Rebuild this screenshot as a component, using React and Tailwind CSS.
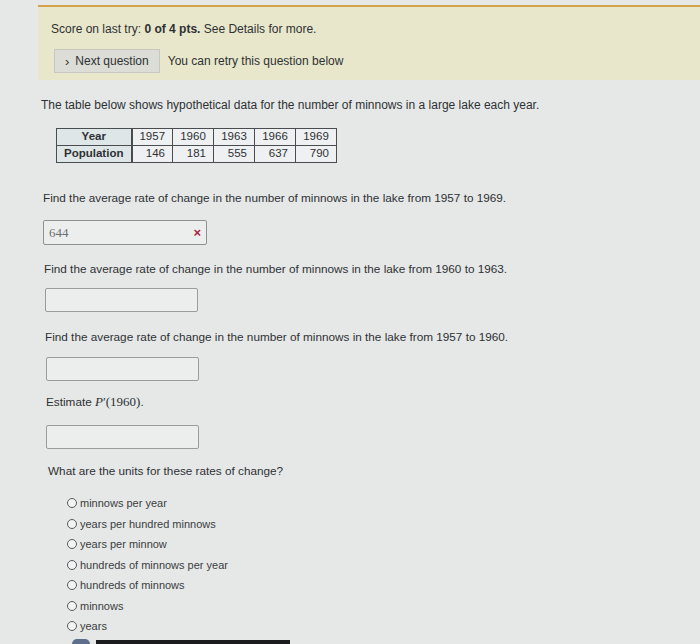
import React from "react";

const years = ["1957", "1960", "1963", "1966", "1969"];
const pops = ["146", "181", "555", "637", "790"];
const units = [
  "minnows per year",
  "years per hundred minnows",
  "years per minnow",
  "hundreds of minnows per year",
  "hundreds of minnows",
  "minnows",
  "years",
];

function Blank({ width = "w-[153px]" }) {
  return <div className={`${width} h-[24px] border border-[#9a9c9c] rounded-[2px] bg-[#eceeee]`} />;
}

export default function App() {
  return (
    <div
      className="w-[700px] h-[644px] overflow-hidden bg-[#e6e8e8] text-[#2e3134] relative"
      style={{ fontFamily: '"Liberation Sans", Arial, sans-serif' }}
    >
      <div className="ml-[38px] mt-[5px] h-[75px] bg-[#e8e7cb] border-t-2 border-[#d3a34c] pl-[13px] pt-[14px]">
        <p className="text-[12px] leading-[16px]">
          Score on last try: <b>0 of 4 pts.</b> See Details for more.
        </p>
        <div className="flex items-center mt-[12px] ml-[3px]">
          <div className="h-[24px] px-[10px] flex items-center gap-[6px] bg-[#dcddd6] border border-[#c6c7c0] text-[12px]">
            <span className="text-[13px] leading-none">›</span>
            <span>Next question</span>
          </div>
          <span className="ml-[8px] text-[12px]">You can retry this question below</span>
        </div>
      </div>

      <p className="ml-[41px] mt-[17px] text-[12px] leading-[16px]">
        The table below shows hypothetical data for the number of minnows in a large lake each year.
      </p>

      <table className="ml-[56px] mt-[15px] border-collapse text-[11.5px] bg-[#eef0f1]">
        <tbody>
          <tr className="h-[17px]">
            <td className="w-[75px] border border-[#4a4d50] border-r-2 bg-[#dfe6e8] text-center font-bold leading-none">Year</td>
            {years.map((y) => (
              <td key={y} className="w-[41px] border border-[#4a4d50] text-center leading-none">{y}</td>
            ))}
          </tr>
          <tr className="h-[17px]">
            <td className="border border-[#4a4d50] border-r-2 bg-[#dfe6e8] text-center font-bold leading-none">Population</td>
            {pops.map((p) => (
              <td key={p} className="border border-[#4a4d50] text-right pr-[7px] leading-none">{p}</td>
            ))}
          </tr>
        </tbody>
      </table>

      <p className="ml-[43px] mt-[27px] text-[11.75px] leading-[16px]">
        Find the average rate of change in the number of minnows in the lake from 1957 to 1969.
      </p>
      <div className="ml-[43px] mt-[14px] w-[164px] h-[25px] border border-[#8f9191] rounded-[2px] bg-[#eceeee] flex items-center justify-between px-[5px]">
        <span className="text-[13px] text-[#6b6e70]" style={{ fontFamily: '"Liberation Serif", serif' }}>644</span>
        <span className="text-[#a2263a] text-[13px] font-bold leading-none">×</span>
      </div>

      <p className="ml-[44px] mt-[16px] text-[11.75px] leading-[16px]">
        Find the average rate of change in the number of minnows in the lake from 1960 to 1963.
      </p>
      <div className="ml-[45px] mt-[11px]"><Blank /></div>

      <p className="ml-[45px] mt-[17px] text-[11.75px] leading-[16px]">
        Find the average rate of change in the number of minnows in the lake from 1957 to 1960.
      </p>
      <div className="ml-[46px] mt-[12px]"><Blank /></div>

      <p className="ml-[46px] mt-[13px] text-[11.75px] leading-[16px]">
        Estimate{" "}
        <span className="text-[13px]" style={{ fontFamily: '"Liberation Serif", serif' }}>
          <i>P</i>′(1960)
        </span>
        .
      </p>
      <div className="ml-[46px] mt-[15px]"><Blank /></div>

      <p className="ml-[48px] mt-[14px] text-[11.75px] leading-[16px]">What are the units for these rates of change?</p>

      <div className="ml-[67px] mt-[16px] flex flex-col gap-[4px]">
        {units.map((u) => (
          <label key={u} className="flex items-center gap-[3px] h-[16.5px] text-[11px] text-[#3a3d40]">
            <span className="w-[10px] h-[10px] rounded-full border border-[#55595c] bg-[#f2f4f4]" />
            <span>{u}</span>
          </label>
        ))}
      </div>

      <div className="absolute left-0 bottom-0 w-full h-[5px] flex items-end">
        <div className="ml-[72px] w-[18px] h-[5px] bg-[#5d6f8c] rounded-t-full" />
        <div className="ml-[6px] w-[194px] h-[4px] bg-[#1a1c1e]" />
      </div>
    </div>
  );
}
